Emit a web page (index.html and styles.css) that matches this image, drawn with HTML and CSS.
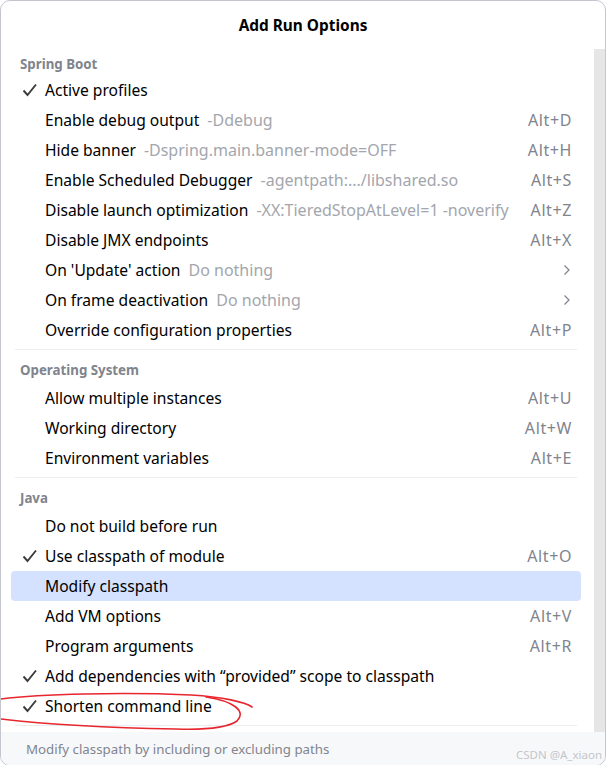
FILE: index.html
```html
<!DOCTYPE html>
<html>
<head>
<meta charset="utf-8">
<link rel="stylesheet" href="styles.css">
</head>
<body>
<div class="win">
  <div class="title">Add Run Options</div>
  <div class="body">
    <div class="list">
      <div class="sec first">Spring Boot</div>
      <div class="row"><span class="chk"><svg width="16" height="16" viewBox="0 0 16 16"><path d="M1.5 8.5 L5.5 13 L14 2.5" fill="none" stroke="#3b3b3b" stroke-width="1.9"/></svg></span><span class="name">Active profiles</span></div>
      <div class="row"><span class="chk"></span><span class="name">Enable debug output</span><span class="hint">-Ddebug</span><span class="key">Alt+D</span></div>
      <div class="row"><span class="chk"></span><span class="name">Hide banner</span><span class="hint">-Dspring.main.banner-mode=OFF</span><span class="key">Alt+H</span></div>
      <div class="row"><span class="chk"></span><span class="name">Enable Scheduled Debugger</span><span class="hint">-agentpath:.../libshared.so</span><span class="key">Alt+S</span></div>
      <div class="row"><span class="chk"></span><span class="name">Disable launch optimization</span><span class="hint">-XX:TieredStopAtLevel=1 -noverify</span><span class="key">Alt+Z</span></div>
      <div class="row"><span class="chk"></span><span class="name">Disable JMX endpoints</span><span class="key">Alt+X</span></div>
      <div class="row"><span class="chk"></span><span class="name">On 'Update' action</span><span class="hint">Do nothing</span><span class="key"><svg class="chev" width="8" height="12" viewBox="0 0 8 12"><path d="M1.5 1.5 L6 6 L1.5 10.5" fill="none" stroke="#7d818a" stroke-width="1.2"/></svg></span></div>
      <div class="row"><span class="chk"></span><span class="name">On frame deactivation</span><span class="hint">Do nothing</span><span class="key"><svg class="chev" width="8" height="12" viewBox="0 0 8 12"><path d="M1.5 1.5 L6 6 L1.5 10.5" fill="none" stroke="#7d818a" stroke-width="1.2"/></svg></span></div>
      <div class="row"><span class="chk"></span><span class="name">Override configuration properties</span><span class="key">Alt+P</span></div>
      <div class="sep"></div>
      <div class="sec">Operating System</div>
      <div class="row"><span class="chk"></span><span class="name">Allow multiple instances</span><span class="key">Alt+U</span></div>
      <div class="row"><span class="chk"></span><span class="name">Working directory</span><span class="key">Alt+W</span></div>
      <div class="row"><span class="chk"></span><span class="name">Environment variables</span><span class="key">Alt+E</span></div>
      <div class="sep"></div>
      <div class="sec">Java</div>
      <div class="row"><span class="chk"></span><span class="name">Do not build before run</span></div>
      <div class="row"><span class="chk"><svg width="16" height="16" viewBox="0 0 16 16"><path d="M1.5 8.5 L5.5 13 L14 2.5" fill="none" stroke="#3b3b3b" stroke-width="1.9"/></svg></span><span class="name">Use classpath of module</span><span class="key">Alt+O</span></div>
      <div class="row sel"><span class="chk"></span><span class="name">Modify classpath</span></div>
      <div class="row"><span class="chk"></span><span class="name">Add VM options</span><span class="key">Alt+V</span></div>
      <div class="row"><span class="chk"></span><span class="name">Program arguments</span><span class="key">Alt+R</span></div>
      <div class="row"><span class="chk"><svg width="16" height="16" viewBox="0 0 16 16"><path d="M1.5 8.5 L5.5 13 L14 2.5" fill="none" stroke="#3b3b3b" stroke-width="1.9"/></svg></span><span class="name">Add dependencies with “provided” scope to classpath</span></div>
      <div class="row"><span class="chk"><svg width="16" height="16" viewBox="0 0 16 16"><path d="M1.5 8.5 L5.5 13 L14 2.5" fill="none" stroke="#3b3b3b" stroke-width="1.9"/></svg></span><span class="name">Shorten command line</span></div>
      <div class="sep"></div>
    </div>
    <div class="scroll"></div>
  </div>
  <div class="footer">Modify classpath by including or excluding paths<span class="wm">CSDN @A_xiaon</span></div>
  <svg class="mark" width="260" height="45" viewBox="0 0 260 45">
    <path d="M0 9 C40 4 120 2 190 5 C222 7 244 12 251 17" fill="none" stroke="#e8262d" stroke-width="1.6" stroke-linecap="round"/>
    <path d="M205 7 C232 11 246 21 236 31 C226 38 205 40 175 39 C120 38 60 36 0 29" fill="none" stroke="#e8262d" stroke-width="1.6" stroke-linecap="round"/>
  </svg>
</div>
</body>
</html>
```

FILE: styles.css
```css
html, body {
  margin: 0;
  padding: 0;
  background: #ffffff;
}
body {
  font-family: "Noto Sans", "Open Sans", sans-serif;
  color: #000000;
}
.win {
  position: relative;
  width: 604px;
  height: 764px;
  border: 1px solid #c3c6cf;
  border-radius: 10px;
  display: flex;
  flex-direction: column;
  overflow: hidden;
  background: #ffffff;
}
.title {
  height: 48px;
  flex: none;
  display: flex;
  align-items: center;
  justify-content: center;
  font-size: 15.4px;
  font-weight: bold;
}
.body {
  flex: 1;
  display: flex;
  min-height: 0;
}
.list {
  flex: 1;
  display: flex;
  flex-direction: column;
}
.scroll {
  width: 11px;
  flex: none;
  background: #e6e6e6;
}
.sec {
  box-sizing: border-box;
  height: 28px;
  padding-top: 1px;
  display: flex;
  align-items: center;
  padding-left: 19px;
  font-size: 13.3px;
  font-weight: bold;
  color: #80848d;
}
.sec.first {
  height: 26px;
  padding-top: 4px;
}
.row {
  height: 30px;
  margin: 0 13px 0 10px;
  padding: 0 9px 0 9px;
  display: flex;
  align-items: center;
  font-size: 15.6px;
  border-radius: 4px;
}
.row.sel {
  background: #d4e2ff;
}
.chk {
  width: 25px;
  height: 16px;
  flex: none;
  display: flex;
  align-items: center;
  padding-left: 2px;
  box-sizing: border-box;
}
.name {
  white-space: nowrap;
}
.hint {
  margin-left: 8px;
  color: #a3a6ad;
  white-space: nowrap;
  font-size: 16px;
}
.key {
  margin-left: auto;
  color: #80848d;
  white-space: nowrap;
  display: flex;
  align-items: center;
  font-size: 16px;
  letter-spacing: 0.6px;
}
.chev {
  margin-right: 1px;
}
.sep {
  height: 1px;
  background: #ebecf0;
  margin: 4px 17px 5px 14px;
}
.footer {
  flex: none;
  height: 34px;
  background: #f7f8fa;
  display: flex;
  align-items: center;
  padding-left: 25px;
  font-size: 13.3px;
  color: #81858e;
  position: relative;
  margin-bottom: -1px;
}
.wm {
  position: absolute;
  right: 3px;
  bottom: 4px;
  font-size: 11.5px;
  color: #c4c6cb;
}
.mark {
  position: absolute;
  left: 0;
  top: 689px;
}
```
